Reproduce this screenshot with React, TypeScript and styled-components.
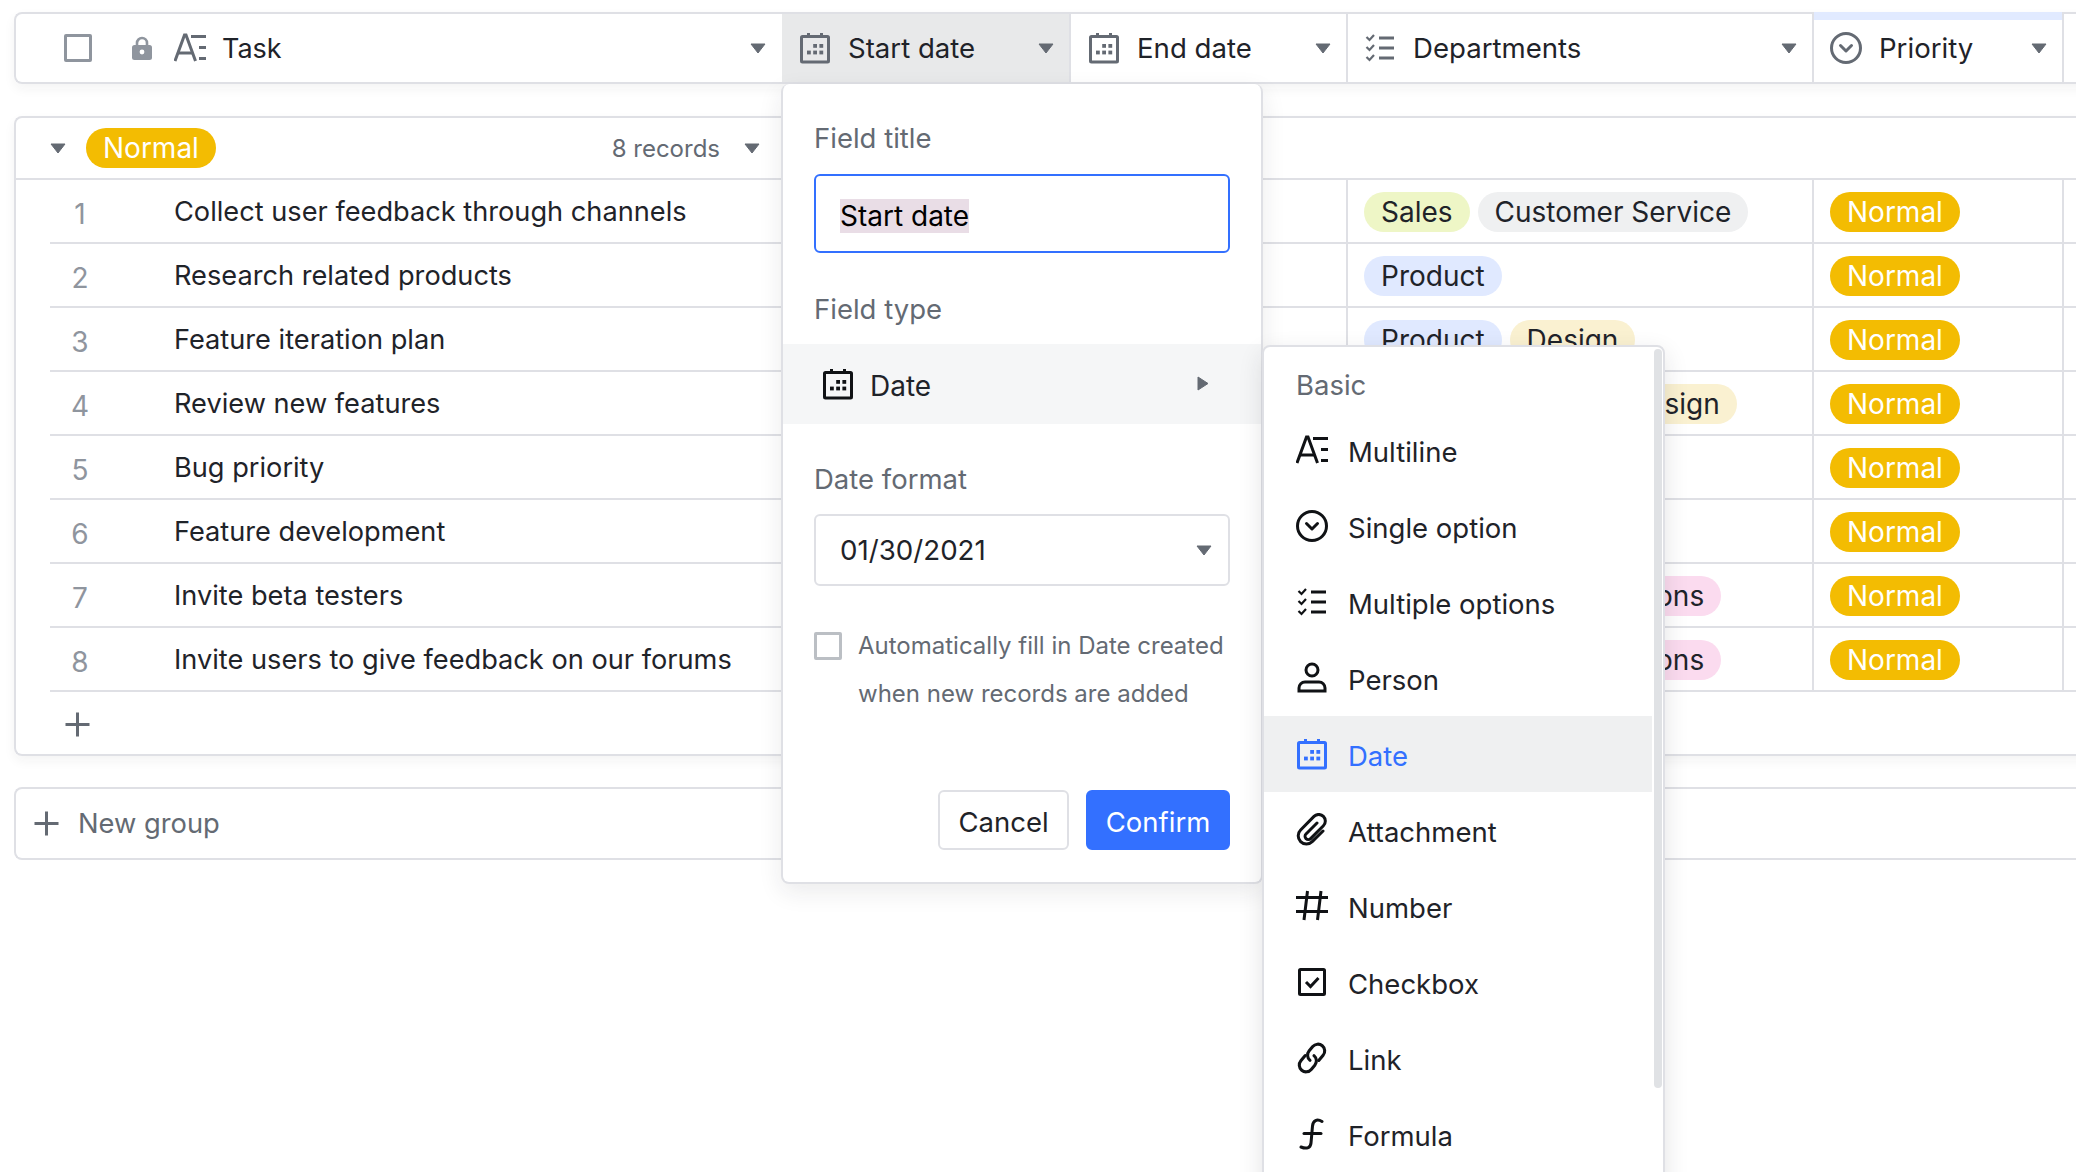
import React from 'react';
import styled, { createGlobalStyle } from 'styled-components';

const line = '#dfe0e5';
const ink = '#1f2329';
const muted = '#646a73';
const blue = '#3370ff';
const iconInk = '#101215';

const GlobalStyle = createGlobalStyle`
    html, body {
        margin: 0;
        background: #fff;
        font-family: Inter, 'Liberation Sans', sans-serif;
        color: ${ink};
    }
    * {
        box-sizing: border-box;
    }
`;

const Page = styled.div`
    position: relative;
    width: 2076px;
    height: 1172px;
    overflow: hidden;
    padding: 12px 0 0 14px;
`;

const Header = styled.div`
    width: 2100px;
    height: 72px;
    display: flex;
    border: 2px solid ${line};
    border-right: none;
    border-radius: 8px 0 0 8px;
    box-shadow: 0 5px 12px rgba(31, 35, 41, 0.05);
    margin-bottom: 32px;
`;

const HeaderCell = styled.div<{ $width: number; $active?: boolean; $accent?: boolean }>`
    position: relative;
    width: ${(p) => p.$width}px;
    flex: none;
    display: flex;
    align-items: center;
    gap: 17px;
    padding: 0 15px 0 16px;
    font-size: 27.6px;
    background: ${(p) => (p.$active ? '#e8e9ea' : 'transparent')};
    border-right: 2px solid ${line};
    ${(p) =>
        p.$accent &&
        `
        &::before {
            content: '';
            position: absolute;
            left: 0;
            right: 0;
            top: -2px;
            height: 8px;
            background: #e1eaff;
        }
    `}
`;

const TaskHeaderCell = styled(HeaderCell)`
    padding: 0 16px 0 48px;
    gap: 0;
    font-size: 27px;
    border-right: none;
`;

const HeaderCheck = styled.span`
    width: 28px;
    height: 28px;
    border: 3px solid #8f959e;
    border-radius: 2px;
    margin-right: 40px;
`;

const LockSlot = styled.span`
    display: flex;
    margin-right: 22px;
`;

const CalendarSlot = styled.span`
    display: flex;
    margin-left: 1px;
`;

const HeaderLabel = styled.span`
    flex: 1;
`;

const TaskLabel = styled(HeaderLabel)`
    margin-left: 16px;
`;

const Group = styled.div`
    width: 2100px;
    border: 2px solid ${line};
    border-right: none;
    border-radius: 8px 0 0 8px;
    box-shadow: 0 5px 12px rgba(31, 35, 41, 0.05);
    margin-bottom: 31px;
`;

const GroupHeader = styled.div`
    height: 62px;
    width: 766px;
    display: flex;
    align-items: center;
    padding: 0 0 2px 34px;
`;

const GroupDivider = styled.div`
    height: 2px;
    background: ${line};
    margin-top: -2px;
`;

const GroupCount = styled.span`
    margin-left: auto;
    font-size: 24px;
    color: ${muted};
    margin-right: 24px;
`;

const GroupCaretSlot = styled.span`
    display: flex;
    margin-right: 20px;
`;

const GroupEndCaret = styled.span`
    display: flex;
    margin-right: 22px;
`;

const Row = styled.div`
    height: 64px;
    margin-left: 34px;
    display: flex;
    border-bottom: 2px solid ${line};
`;

const RowNumber = styled.div`
    width: 60px;
    padding-top: 6px;
    text-align: center;
    align-self: center;
    font-size: 28px;
    color: #8f959e;
`;

const RowTitle = styled.div`
    width: 672px;
    padding: 1px 0 0 64px;
    align-self: center;
    font-size: 27.2px;
    white-space: nowrap;
`;

const BlankCell = styled.div<{ $width: number }>`
    width: ${(p) => p.$width}px;
`;

const TagCell = styled.div<{ $width: number; $closed?: boolean }>`
    width: ${(p) => p.$width}px;
    display: flex;
    align-items: center;
    gap: 8px;
    padding: 2px 0 0 16px;
    border-left: 2px solid ${line};
    border-right: ${(p) => (p.$closed ? `2px solid ${line}` : 'none')};
`;

const Tag = styled.span<{ $bg: string; $light?: boolean; $width?: number }>`
    height: 40px;
    ${(p) => (p.$width ? `width: ${p.$width}px;` : '')}
    flex: none;
    padding: 0 17px;
    border-radius: 20px;
    display: inline-flex;
    align-items: center;
    overflow: hidden;
    white-space: nowrap;
    font-size: 28px;
    background: ${(p) => p.$bg};
    color: ${(p) => (p.$light ? '#fff' : ink)};
`;

const AddRow = styled.div`
    height: 62px;
    padding: 2px 0 0 49px;
    display: flex;
    align-items: center;
`;

const NewGroup = styled.div`
    width: 2100px;
    height: 73px;
    display: flex;
    align-items: center;
    gap: 19px;
    padding-left: 18px;
    border: 2px solid ${line};
    border-right: none;
    border-radius: 8px 0 0 8px;
    font-size: 27.3px;
    color: ${muted};
`;

const FieldPanel = styled.div`
    position: absolute;
    left: 781px;
    top: 84px;
    width: 482px;
    height: 800px;
    background: #fff;
    border: 2px solid ${line};
    border-top: none;
    border-radius: 8px;
    box-shadow: 0 8px 24px rgba(31, 35, 41, 0.09);
    padding-top: 34px;
    z-index: 2;
`;

const PanelLabel = styled.div<{ $top?: number; $bottom?: number }>`
    height: 40px;
    margin: ${(p) => p.$top ?? 0}px 0 ${(p) => p.$bottom ?? 15}px 31px;
    display: flex;
    align-items: center;
    font-size: 27.5px;
    color: ${muted};
`;

const TitleInput = styled.div`
    width: 416px;
    height: 79px;
    margin-left: 31px;
    padding: 4px 0 0 24px;
    display: flex;
    align-items: center;
    border: 2px solid ${blue};
    border-radius: 6px;
    font-size: 28px;
    color: #000;
`;

const SelectedText = styled.span`
    background: #e9dde6;
    line-height: 34px;
`;

const TypeRow = styled.div`
    height: 80px;
    display: flex;
    align-items: center;
    gap: 16px;
    padding: 0 52px 0 39px;
    background: #f5f6f7;
    font-size: 28px;
`;

const TypeLabel = styled.span`
    flex: 1;
    padding-top: 3px;
`;

const TypeCaret = styled.span`
    display: flex;
    margin-top: -2px;
`;

const DateSelect = styled.div`
    width: 416px;
    height: 72px;
    margin-left: 31px;
    padding: 0 16px 0 24px;
    display: flex;
    align-items: center;
    justify-content: space-between;
    border: 2px solid ${line};
    border-radius: 6px;
    font-size: 27.7px;
`;

const AutoFill = styled.div`
    display: flex;
    gap: 16px;
    margin: 46px 0 0 31px;
`;

const AutoFillBox = styled.span`
    flex: none;
    width: 28px;
    height: 28px;
    border: 3px solid #bbbfc4;
    border-radius: 2px;
`;

const AutoFillText = styled.div`
    margin-top: -10px;
    font-size: 24px;
    line-height: 48px;
    color: ${muted};
`;

const PanelActions = styled.div`
    display: flex;
    justify-content: flex-end;
    gap: 17px;
    margin: 72px 31px 0 0;
`;

const ActionButton = styled.button<{ $primary?: boolean }>`
    height: 60px;
    padding: 4px 0 0;
    width: ${(p) => (p.$primary ? 144 : 131)}px;
    border-radius: 6px;
    border: 2px solid ${(p) => (p.$primary ? blue : line)};
    background: ${(p) => (p.$primary ? blue : '#fff')};
    color: ${(p) => (p.$primary ? '#fff' : ink)};
    font-family: inherit;
    font-size: 27.5px;
`;

const TypeMenu = styled.div`
    position: absolute;
    left: 1262px;
    top: 345px;
    width: 403px;
    height: 860px;
    background: #fff;
    border: 2px solid ${line};
    border-radius: 8px;
    box-shadow: 0 8px 24px rgba(31, 35, 41, 0.12);
    z-index: 3;
`;

const MenuHeading = styled.div`
    height: 65px;
    padding: 10px 0 0 32px;
    display: flex;
    align-items: center;
    font-size: 27.5px;
    color: ${muted};
`;

const MenuItem = styled.div<{ $active?: boolean }>`
    width: 388px;
    height: 76px;
    display: flex;
    align-items: center;
    gap: 20px;
    padding-left: 32px;
    font-size: 27.5px;
    color: ${(p) => (p.$active ? blue : ink)};
    background: ${(p) => (p.$active ? '#eff0f1' : 'transparent')};
`;

const MenuLabel = styled.span`
    padding-top: 4px;
`;

const MenuScrollbar = styled.div`
    position: absolute;
    top: 2px;
    right: 1px;
    width: 8px;
    height: 739px;
    border-radius: 4px;
    background: #e0e2e5;
`;

const IconSvg = styled.svg`
    flex: none;
    display: block;
`;

const Caret = ({ dir = 'down' }: { dir?: 'down' | 'right' }) => (
    <IconSvg
        width={dir === 'down' ? 16 : 12}
        height={dir === 'down' ? 11 : 15}
        viewBox={dir === 'down' ? '0 0 16 11' : '0 0 12 15'}
    >
        <polygon
            points={dir === 'down' ? '1,1 15,1 8,10' : '1,1 11,7.5 1,14'}
            fill={muted}
            stroke={muted}
            strokeWidth="1"
            strokeLinejoin="round"
        />
    </IconSvg>
);

type IconProps = { color?: string };

const stroke = (color: string, width = 3) => ({
    fill: 'none',
    stroke: color,
    strokeWidth: width,
});

const MultilineIcon = ({ color = iconInk }: IconProps) => (
    <IconSvg width="32" height="32" viewBox="0 0 32 32">
        <g {...stroke(color)}>
            <path d="M1 29 L10.5 3 L12 3 L21.5 29" />
            <path d="M5 21 H18" />
            <path d="M17 4.5 H32 M25 15.5 H32 M25 26.5 H32" />
        </g>
    </IconSvg>
);

const SingleIcon = ({ color = iconInk }: IconProps) => (
    <IconSvg width="32" height="32" viewBox="0 0 32 32">
        <g {...stroke(color)}>
            <circle cx="16" cy="16" r="14.5" />
            <path d="M10.5 13.5 L16 19 L21.5 13.5" strokeLinecap="round" strokeLinejoin="round" />
        </g>
    </IconSvg>
);

const MultiIcon = ({ color = iconInk }: IconProps) => (
    <IconSvg width="32" height="32" viewBox="0 0 32 32">
        <g {...stroke(color)}>
            <path d="M15 6 H30 M15 16 H30 M15 26 H30" />
            <path d="M2.5 5 L5.5 8 L10 3 M2.5 15 L5.5 18 L10 13 M2.5 25 L5.5 28 L10 23" strokeWidth="2.2" />
        </g>
    </IconSvg>
);

const PersonIcon = ({ color = iconInk }: IconProps) => (
    <IconSvg width="32" height="32" viewBox="0 0 32 32">
        <g {...stroke(color)}>
            <circle cx="16" cy="8" r="6" />
            <path d="M3 29 V26 A6 6 0 0 1 9 20 H23 A6 6 0 0 1 29 26 V29 Z" />
        </g>
    </IconSvg>
);

const CalendarIcon = ({ color = iconInk, size = 32 }: IconProps & { size?: number }) => (
    <IconSvg width={size} height={size} viewBox="0 0 32 32">
        <g {...stroke(color)}>
            <rect x="2.5" y="4.5" width="27" height="25.5" rx="1" />
            <path d="M9.5 1 V6 M22.5 1 V6" />
        </g>
        <g fill={color}>
            <rect x="14.2" y="12" width="3.8" height="3.8" />
            <rect x="20.4" y="12" width="3.8" height="3.8" />
            <rect x="8" y="18.6" width="3.8" height="3.8" />
            <rect x="14.2" y="18.6" width="3.8" height="3.8" />
            <rect x="20.4" y="18.6" width="3.8" height="3.8" />
        </g>
    </IconSvg>
);

const AttachmentIcon = ({ color = iconInk }: IconProps) => (
    <IconSvg width="32" height="34" viewBox="0 0 32 34">
        <path
            {...stroke(color)}
            strokeLinecap="round"
            d="M21 10 L10 21 A3.2 3.2 0 0 0 14.6 25.6 L27.4 12.8 A6.6 6.6 0 0 0 18 3.4 L4.6 17 A8.2 8.2 0 0 0 16.2 28.6 L27 18"
        />
    </IconSvg>
);

const NumberIcon = ({ color = iconInk }: IconProps) => (
    <IconSvg width="32" height="32" viewBox="0 0 32 32">
        <path {...stroke(color)} d="M0 7.5 H32 M0 21.5 H32 M11.5 1 L8 30 M25 1 L21.5 30" />
    </IconSvg>
);

const CheckboxIcon = ({ color = iconInk }: IconProps) => (
    <IconSvg width="32" height="32" viewBox="0 0 32 32">
        <rect {...stroke(color, 3)} x="3.5" y="3.5" width="25" height="25" rx="1" />
        <path {...stroke(color, 3)} d="M10 16 L14.5 20.5 L22.5 12" />
    </IconSvg>
);

const LinkIcon = ({ color = iconInk }: IconProps) => (
    <IconSvg width="32" height="32" viewBox="3 3 26 26">
        <g {...stroke(color, 2.5)} strokeLinecap="round" transform="rotate(-50 16 16)">
            <path d="M14 10.5 H8.5 A5.5 5.5 0 0 0 8.5 21.5 H13 A5.5 5.5 0 0 0 18.5 16" />
            <path d="M18 21.5 H23.5 A5.5 5.5 0 0 0 23.5 10.5 H19 A5.5 5.5 0 0 0 13.5 16" />
        </g>
    </IconSvg>
);

const FormulaIcon = ({ color = iconInk }: IconProps) => (
    <IconSvg width="32" height="32" viewBox="0 0 32 32">
        <g {...stroke(color)} strokeLinecap="round">
            <path d="M26 3.5 C21 0.5 17 2.5 16.5 8 L15 25 C14.5 30.5 10 31 5 29" />
            <path d="M8 15.5 H25" />
        </g>
    </IconSvg>
);

const LockIcon = () => (
    <IconSvg width="20" height="24" viewBox="0 0 20 24">
        <path d="M5 11 V7 A5 5 0 0 1 15 7 V11" fill="none" stroke="#8f959e" strokeWidth="2.6" />
        <rect x="0" y="9" width="20" height="15" rx="2.5" fill="#8f959e" />
        <circle cx="10" cy="16" r="2.4" fill="#fff" />
    </IconSvg>
);

const PlusIcon = () => (
    <IconSvg width="25" height="25" viewBox="0 0 25 25">
        <path d="M12.5 0.5 V24.5 M0.5 12.5 H24.5" stroke={muted} strokeWidth="3" />
    </IconSvg>
);

const tagColors: Record<string, string> = {
    Sales: '#eef6c6',
    'Customer Service': '#eff0f1',
    Product: '#e0e9ff',
    Design: '#faf1d1',
    Operations: '#fbdbef',
};

type RowData = { title: string; tags: string[]; spacer?: number };

const rows: RowData[] = [
    { title: 'Collect user feedback through channels', tags: ['Sales', 'Customer Service'] },
    { title: 'Research related products', tags: ['Product'] },
    { title: 'Feature iteration plan', tags: ['Product', 'Design'] },
    { title: 'Review new features', tags: ['Design'], spacer: 239 },
    { title: 'Bug priority', tags: ['Product'] },
    { title: 'Feature development', tags: ['Product'] },
    { title: 'Invite beta testers', tags: ['Operations'], spacer: 170 },
    { title: 'Invite users to give feedback on our forums', tags: ['Operations'], spacer: 170 },
];

const menuItems = [
    { label: 'Multiline', Icon: MultilineIcon },
    { label: 'Single option', Icon: SingleIcon },
    { label: 'Multiple options', Icon: MultiIcon },
    { label: 'Person', Icon: PersonIcon },
    { label: 'Date', Icon: CalendarIcon, active: true },
    { label: 'Attachment', Icon: AttachmentIcon },
    { label: 'Number', Icon: NumberIcon },
    { label: 'Checkbox', Icon: CheckboxIcon },
    { label: 'Link', Icon: LinkIcon },
    { label: 'Formula', Icon: FormulaIcon },
];

const App = () => {
    return (
        <Page>
            <GlobalStyle />
            <Header>
                <TaskHeaderCell $width={766}>
                    <HeaderCheck />
                    <LockSlot>
                        <LockIcon />
                    </LockSlot>
                    <MultilineIcon color={muted} />
                    <TaskLabel>Task</TaskLabel>
                    <Caret />
                </TaskHeaderCell>
                <HeaderCell $width={289} $active>
                    <CalendarSlot>
                        <CalendarIcon color={muted} />
                    </CalendarSlot>
                    <HeaderLabel>Start date</HeaderLabel>
                    <Caret />
                </HeaderCell>
                <HeaderCell $width={277}>
                    <CalendarSlot>
                        <CalendarIcon color={muted} />
                    </CalendarSlot>
                    <HeaderLabel>End date</HeaderLabel>
                    <Caret />
                </HeaderCell>
                <HeaderCell $width={466}>
                    <MultiIcon color={muted} />
                    <HeaderLabel>Departments</HeaderLabel>
                    <Caret />
                </HeaderCell>
                <HeaderCell $width={250} $accent>
                    <SingleIcon color={muted} />
                    <HeaderLabel>Priority</HeaderLabel>
                    <Caret />
                </HeaderCell>
            </Header>
            <Group>
                <GroupHeader>
                    <GroupCaretSlot>
                        <Caret />
                    </GroupCaretSlot>
                    <Tag $bg="#f3bc02" $light>
                        Normal
                    </Tag>
                    <GroupCount>8 records</GroupCount>
                    <GroupEndCaret>
                        <Caret />
                    </GroupEndCaret>
                </GroupHeader>
                <GroupDivider />
                {rows.map((row, i) => (
                    <Row key={row.title}>
                        <RowNumber>{i + 1}</RowNumber>
                        <RowTitle>{row.title}</RowTitle>
                        <BlankCell $width={289} />
                        <BlankCell $width={275} />
                        <TagCell $width={466}>
                            {row.spacer && (
                                <Tag $bg={tagColors.Product} $width={row.spacer}>
                                    Product
                                </Tag>
                            )}
                            {row.tags.map((t) => (
                                <Tag key={t} $bg={tagColors[t]}>
                                    {t}
                                </Tag>
                            ))}
                        </TagCell>
                        <TagCell $width={252} $closed>
                            <Tag $bg="#f3bc02" $light>
                                Normal
                            </Tag>
                        </TagCell>
                    </Row>
                ))}
                <AddRow>
                    <PlusIcon />
                </AddRow>
            </Group>
            <NewGroup>
                <PlusIcon />
                New group
            </NewGroup>

            <FieldPanel>
                <PanelLabel $bottom={16}>Field title</PanelLabel>
                <TitleInput>
                    <SelectedText>Start date</SelectedText>
                </TitleInput>
                <PanelLabel $top={36}>Field type</PanelLabel>
                <TypeRow>
                    <CalendarIcon />
                    <TypeLabel>Date</TypeLabel>
                    <TypeCaret>
                        <Caret dir="right" />
                    </TypeCaret>
                </TypeRow>
                <PanelLabel $top={35}>Date format</PanelLabel>
                <DateSelect>
                    01/30/2021
                    <Caret />
                </DateSelect>
                <AutoFill>
                    <AutoFillBox />
                    <AutoFillText>
                        Automatically fill in Date created
                        <br />
                        when new records are added
                    </AutoFillText>
                </AutoFill>
                <PanelActions>
                    <ActionButton>Cancel</ActionButton>
                    <ActionButton $primary>Confirm</ActionButton>
                </PanelActions>
            </FieldPanel>

            <TypeMenu>
                <MenuHeading>Basic</MenuHeading>
                {menuItems.map(({ label, Icon, active }) => (
                    <MenuItem key={label} $active={active}>
                        <Icon color={active ? blue : iconInk} />
                        <MenuLabel>{label}</MenuLabel>
                    </MenuItem>
                ))}
                <MenuScrollbar />
            </TypeMenu>
        </Page>
    );
};

export default App;
